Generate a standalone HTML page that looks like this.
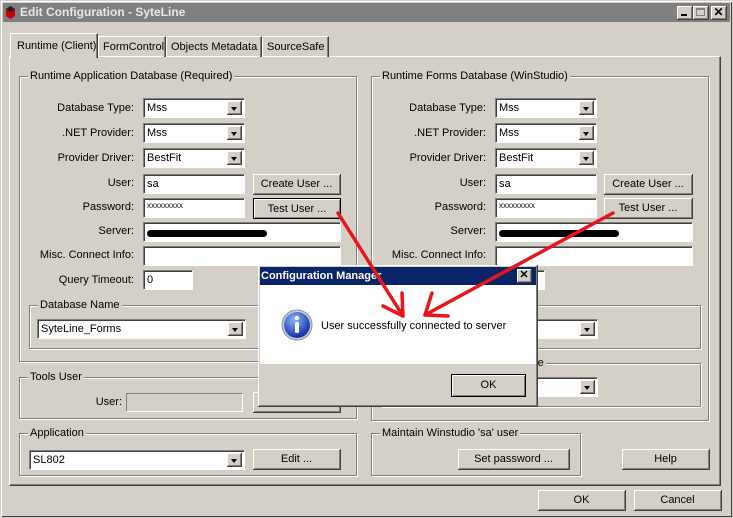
<!DOCTYPE html>
<html><head><meta charset="utf-8"><style>
*{box-sizing:border-box;margin:0;padding:0}
body{width:733px;height:518px;background:#d4d0c8;font-family:"Liberation Sans",sans-serif;font-size:11px;color:#000;position:relative;overflow:hidden}
.a{position:absolute}
.lbl{position:absolute;text-align:right;white-space:nowrap;line-height:14px}
.grp{position:absolute;border:1px solid #808080;box-shadow:1px 1px 0 #fff,inset 1px 1px 0 #fff}
.gt{position:absolute;top:-8px;left:8px;background:#d4d0c8;padding:0 2px;white-space:nowrap;line-height:14px}
.tb{position:absolute;background:#fff;border-top:1px solid #808080;border-left:1px solid #808080;border-right:1px solid #fff;border-bottom:1px solid #fff;box-shadow:inset 1px 1px 0 #404040;padding:3px 0 0 3px;line-height:13px;white-space:nowrap;overflow:hidden}
.dd{position:absolute;right:2px;top:2px;bottom:2px;width:15px;background:#d4d0c8;border-right:1px solid #404040;border-bottom:1px solid #404040;box-shadow:inset 1px 1px 0 #fff,inset -1px -1px 0 #808080}
.dd:after{content:"";position:absolute;left:4px;top:6px;border-left:3.5px solid transparent;border-right:3.5px solid transparent;border-top:4px solid #000}
.btn{position:absolute;background:#d4d0c8;border-right:1px solid #404040;border-bottom:1px solid #404040;box-shadow:inset 1px 1px 0 #fff,inset -1px -1px 0 #808080;text-align:center;white-space:nowrap}
.tab{position:absolute;top:36px;height:21px;border:1px solid #fff;border-bottom:none;border-right:1px solid #404040;box-shadow:inset -1px 0 0 #808080;padding:4px 0 0 4px;white-space:nowrap;font-size:11px;line-height:13px}
</style></head><body>
<div class="a" style="left:0;top:0;width:733px;height:518px;border:1px solid #d4d0c8;box-shadow:inset 1px 1px 0 #fff,inset -1px -1px 0 #404040"></div>
<div class="a" style="left:3px;top:3px;width:727px;height:19px;background:#808080"></div>
<div class="a" style="left:5px;top:5px;width:11px;height:15px"><svg width="11" height="15"><path d="M5.5 1 L10 4 L10 11 L5.5 14 L1 11 L1 4Z" fill="#c00"/><path d="M5.5 1 L10 4 L5.5 7 L1 4Z" fill="#222"/></svg></div>
<div class="a" style="left:20px;top:5px;color:#e8e8e8;font-weight:bold;font-size:12px;line-height:15px">Edit Configuration - SyteLine</div>
<div class="btn" style="left:677px;top:6px;width:16px;height:14px"><div class="a" style="left:4px;top:8px;width:6px;height:2px;background:#000"></div></div>
<div class="btn" style="left:693px;top:6px;width:16px;height:14px"><div class="a" style="left:3px;top:2px;width:9px;height:8px;border:1px solid #808080;border-top:2px solid #808080"></div></div>
<div class="btn" style="left:711px;top:6px;width:16px;height:14px;font-weight:bold;font-size:12px;line-height:12px">✕</div>

<div class="a" style="left:9px;top:56px;width:712px;height:430px;border:1px solid #fff;border-right:1px solid #404040;border-bottom:1px solid #404040;box-shadow:inset -1px -1px 0 #808080"></div>
<div class="tab" style="left:98px;width:68px">FormControl</div>
<div class="tab" style="left:166px;width:96px">Objects Metadata</div>
<div class="tab" style="left:262px;width:67px">SourceSafe</div>
<div class="tab" style="left:10px;top:33px;height:25px;width:88px;background:#d4d0c8;padding-top:6px;padding-left:6px">Runtime (Client)</div>

<div class="grp" style="left:19px;top:76px;width:338px;height:286px"><div class="gt">Runtime Application Database (Required)</div></div>
<div class="lbl" style="left:20px;width:114px;top:101px">Database Type:</div>
<div class="tb" style="left:143px;top:98px;width:102px;height:20px">Mss<div class="dd"></div></div>
<div class="lbl" style="left:20px;width:114px;top:126px">.NET Provider:</div>
<div class="tb" style="left:143px;top:123px;width:102px;height:20px">Mss<div class="dd"></div></div>
<div class="lbl" style="left:20px;width:114px;top:151px">Provider Driver:</div>
<div class="tb" style="left:143px;top:148px;width:102px;height:20px">BestFit<div class="dd"></div></div>
<div class="lbl" style="left:20px;width:114px;top:176px">User:</div>
<div class="tb" style="left:143px;top:174px;width:102px;height:20px">sa</div>
<div class="btn" style="left:253px;top:174px;width:88px;height:21px;line-height:20px">Create User ...</div>
<div class="lbl" style="left:20px;width:114px;top:200px">Password:</div>
<div class="tb" style="left:143px;top:198px;width:102px;height:20px;font-size:8px;line-height:8px">xxxxxxxxx</div>
<div class="btn" style="left:253px;top:198px;width:88px;height:21px;line-height:20px;border:1px solid #000">Test User ...</div>
<div class="lbl" style="left:20px;width:114px;top:224px">Server:</div>
<div class="tb" style="left:143px;top:222px;width:198px;height:20px"><div class="a" style="left:3px;top:7px;width:120px;height:7px;border-radius:4px;background:#000"></div></div>
<div class="lbl" style="left:20px;width:114px;top:248px">Misc. Connect Info:</div>
<div class="tb" style="left:143px;top:246px;width:198px;height:20px"></div>
<div class="lbl" style="left:20px;width:114px;top:273px">Query Timeout:</div>
<div class="tb" style="left:143px;top:270px;width:50px;height:20px">0</div>
<div class="grp" style="left:29px;top:305px;width:318px;height:44px"><div class="gt">Database Name</div></div>
<div class="tb" style="left:37px;top:319px;width:209px;height:20px">SyteLine_Forms<div class="dd"></div></div>

<div class="grp" style="left:19px;top:377px;width:338px;height:42px"><div class="gt">Tools User</div></div>
<div class="lbl" style="left:60px;width:62px;top:395px">User:</div>
<div class="a" style="left:126px;top:393px;width:117px;height:19px;border:1px solid #808080;border-right-color:#fff;border-bottom-color:#fff"></div>
<div class="btn" style="left:253px;top:392px;width:88px;height:21px"></div>

<div class="grp" style="left:19px;top:433px;width:338px;height:43px"><div class="gt">Application</div></div>
<div class="tb" style="left:29px;top:450px;width:216px;height:20px">SL802<div class="dd"></div></div>
<div class="btn" style="left:253px;top:449px;width:88px;height:21px;line-height:20px">Edit ...</div>

<div class="grp" style="left:371px;top:76px;width:338px;height:345px"><div class="gt">Runtime Forms Database (WinStudio)</div></div>
<div class="lbl" style="left:372px;width:114px;top:101px">Database Type:</div>
<div class="tb" style="left:495px;top:98px;width:102px;height:20px">Mss<div class="dd"></div></div>
<div class="lbl" style="left:372px;width:114px;top:126px">.NET Provider:</div>
<div class="tb" style="left:495px;top:123px;width:102px;height:20px">Mss<div class="dd"></div></div>
<div class="lbl" style="left:372px;width:114px;top:151px">Provider Driver:</div>
<div class="tb" style="left:495px;top:148px;width:102px;height:20px">BestFit<div class="dd"></div></div>
<div class="lbl" style="left:372px;width:114px;top:176px">User:</div>
<div class="tb" style="left:495px;top:174px;width:102px;height:20px">sa</div>
<div class="btn" style="left:604px;top:174px;width:89px;height:21px;line-height:20px">Create User ...</div>
<div class="lbl" style="left:372px;width:114px;top:200px">Password:</div>
<div class="tb" style="left:495px;top:198px;width:102px;height:20px;font-size:8px;line-height:8px">xxxxxxxxx</div>
<div class="btn" style="left:604px;top:198px;width:89px;height:21px;line-height:20px">Test User ...</div>
<div class="lbl" style="left:372px;width:114px;top:224px">Server:</div>
<div class="tb" style="left:495px;top:222px;width:198px;height:20px"><div class="a" style="left:3px;top:7px;width:120px;height:7px;border-radius:4px;background:#000"></div></div>
<div class="lbl" style="left:372px;width:114px;top:248px">Misc. Connect Info:</div>
<div class="tb" style="left:495px;top:246px;width:198px;height:20px"></div>
<div class="tb" style="left:495px;top:270px;width:50px;height:20px"></div>
<div class="grp" style="left:381px;top:305px;width:320px;height:44px"></div>
<div class="tb" style="left:389px;top:319px;width:209px;height:20px"><div class="dd"></div></div>
<div class="grp" style="left:381px;top:363px;width:320px;height:44px"><div class="gt" style="left:46px">Forms Database Name</div></div>
<div class="tb" style="left:389px;top:377px;width:209px;height:20px"><div class="dd"></div></div>

<div class="grp" style="left:371px;top:433px;width:210px;height:43px"><div class="gt">Maintain Winstudio 'sa' user</div></div>
<div class="btn" style="left:458px;top:449px;width:112px;height:21px;line-height:20px">Set password ...</div>
<div class="btn" style="left:622px;top:449px;width:88px;height:21px;line-height:20px">Help</div>
<div class="btn" style="left:538px;top:490px;width:88px;height:21px;line-height:20px">OK</div>
<div class="btn" style="left:634px;top:490px;width:88px;height:21px;line-height:20px">Cancel</div>

<div class="a" style="left:258px;top:265px;width:280px;height:142px;background:#d4d0c8;border-right:1px solid #404040;border-bottom:1px solid #404040;box-shadow:inset 1px 1px 0 #fff,inset -1px -1px 0 #808080"></div>
<div class="a" style="left:260px;top:267px;width:276px;height:18px;background:#0a246a"></div>
<div class="a" style="left:261px;top:269px;color:#fff;font-weight:bold;font-size:11px;line-height:14px">Configuration Manager</div>
<div class="btn" style="left:517px;top:269px;width:15px;height:14px;font-weight:bold;font-size:11px;line-height:13px">✕</div>
<div class="a" style="left:260px;top:285px;width:276px;height:79px;background:#fff"></div>
<div class="a" style="left:281px;top:309px"><svg width="32" height="32"><defs><radialGradient id="g" cx="40%" cy="30%" r="70%"><stop offset="0" stop-color="#8fb4ff"/><stop offset="1" stop-color="#1030a0"/></radialGradient></defs><circle cx="16" cy="16" r="15" fill="#c8ccd8" stroke="#8890a0"/><circle cx="16" cy="16" r="13" fill="url(#g)"/><circle cx="16" cy="9" r="2.2" fill="#fff"/><rect x="14" y="13" width="4" height="11" rx="1.5" fill="#fff"/></svg></div>
<div class="a" style="left:321px;top:319px;font-size:11px;line-height:14px">User successfully connected to server</div>
<div class="btn" style="left:451px;top:374px;width:75px;height:23px;line-height:21px;border:1px solid #000">OK</div>

<svg class="a" style="left:0;top:0" width="733" height="518"><g stroke="#e8161b" stroke-width="3.5" fill="none" stroke-linecap="round" stroke-linejoin="round"><path d="M338 213 L403 316"/><path d="M383 306 L403 316 L402 293"/><path d="M613 213 L425 315"/><path d="M432 293 L425 315 L448 316"/></g></svg>
</body></html>
